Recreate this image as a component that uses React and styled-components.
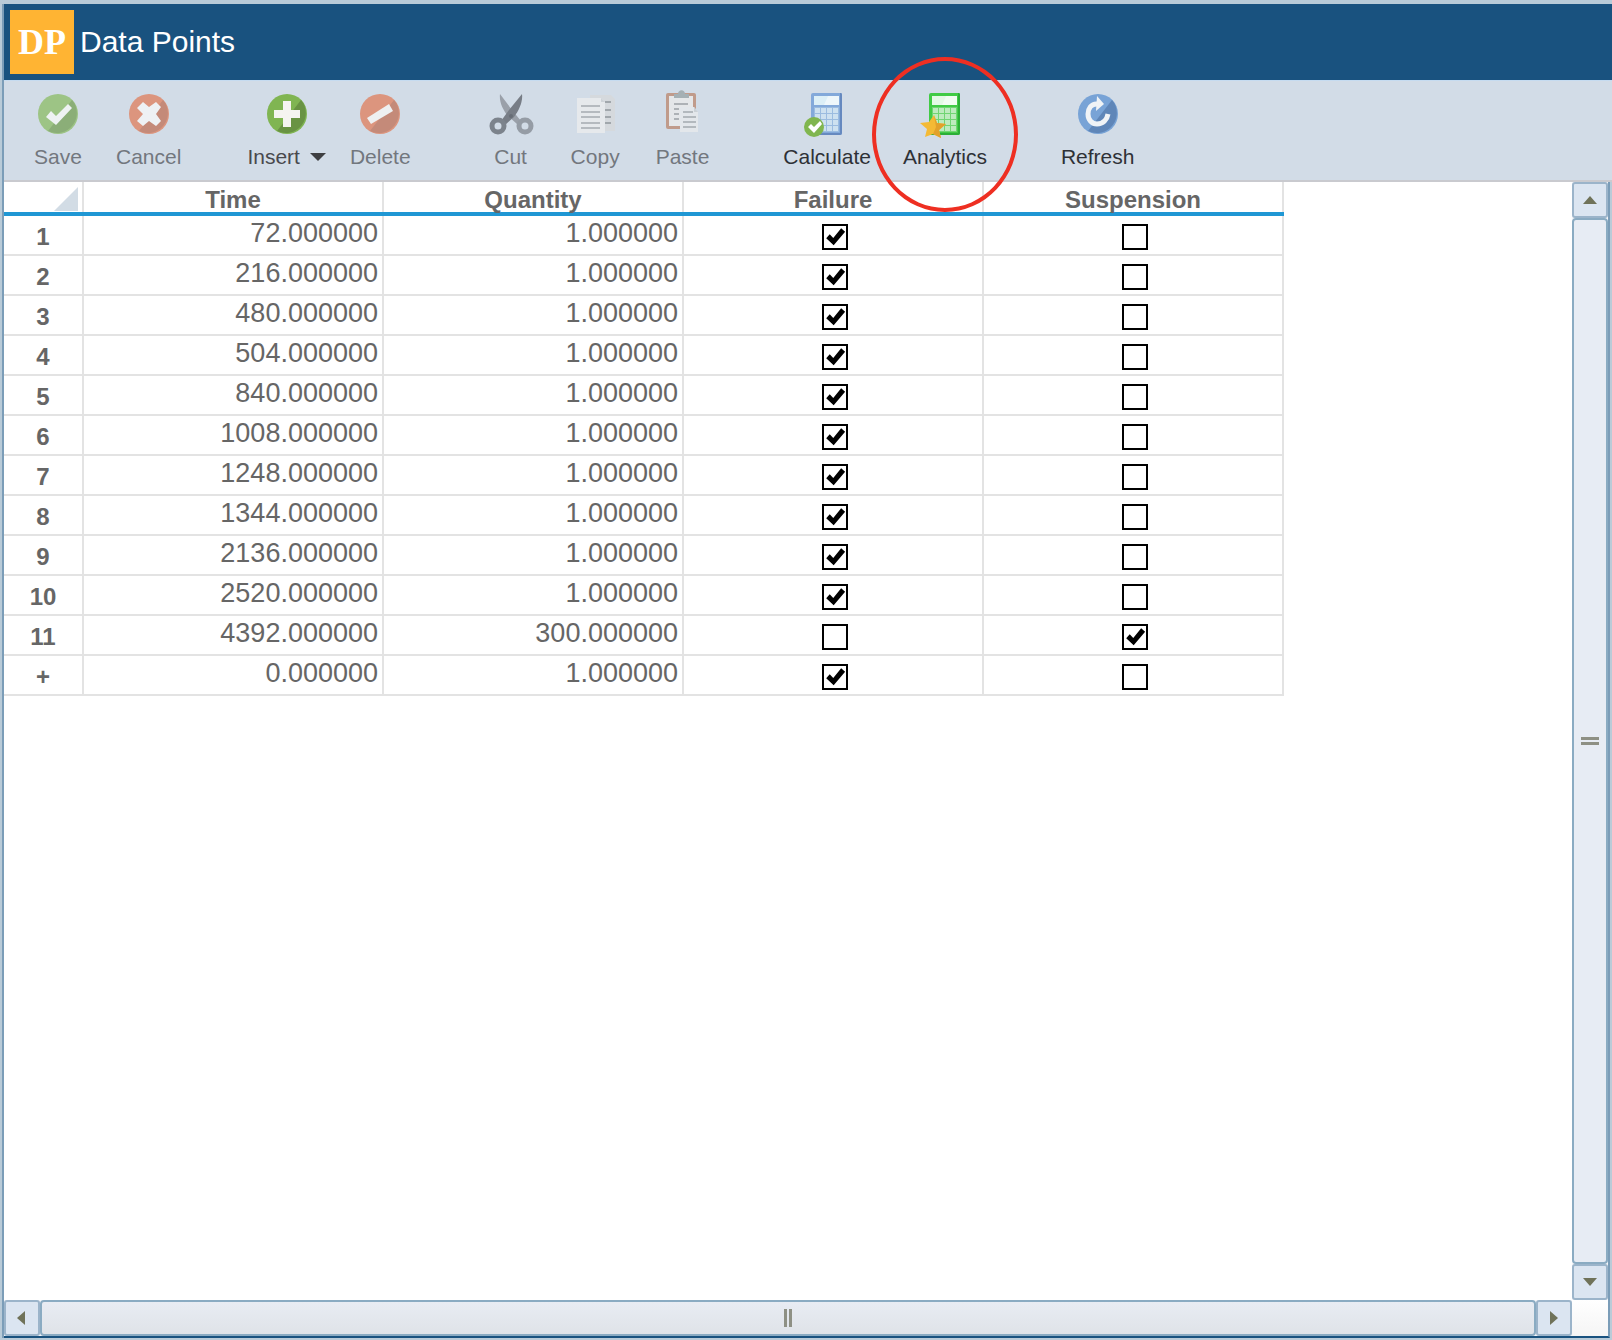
import React, { useState } from "react";
import styled, { createGlobalStyle, css } from "styled-components";

const GlobalStyle = createGlobalStyle`
  * {
    box-sizing: border-box;
  }

  body {
    margin: 0;
    background: #b9cbd8;
    font-family: "Liberation Sans", Arial, sans-serif;
  }
`;

const StyledWindow = styled.div`
  min-height: 100vh;
  padding: 4px 0 2px 2px;
  display: flex;
  flex-direction: column;
  background: #b9cbd8;
`;

const Frame = styled.div`
  flex: 1;
  display: flex;
  flex-direction: column;
  border-left: 2px solid #7b9db8;
`;

const TitleBar = styled.header`
  height: 76px;
  padding: 0 6px;
  display: flex;
  align-items: center;
  gap: 6px;
  background: #19527f;
`;

const Logo = styled.div`
  width: 64px;
  height: 64px;
  display: flex;
  align-items: center;
  justify-content: center;
  background: #ffb433;
  color: #ffffff;
  font: bold 36px/60px "Liberation Serif", serif;
`;

const Title = styled.h1`
  margin: 0;
  color: #ffffff;
  font-size: 30px;
  font-weight: normal;
`;

const StyledToolbar = styled.div`
  height: 102px;
  padding: 12px 30px 0;
  display: flex;
  align-items: flex-start;
  background: #d2dce7;
  border-bottom: 2px solid #c9cacf;
  box-shadow: inset 0 1px #c5dbf0;
`;

const ToolGroup = styled.div`
  display: flex;
  gap: ${({ $gap }) => $gap}px;
  margin-right: ${({ $after }) => $after}px;
`;

const StyledTool = styled.button`
  position: relative;
  min-width: 48px;
  padding: 0;
  display: flex;
  flex-direction: column;
  align-items: center;
  gap: 9px;
  border: 0;
  background: none;
  color: ${({ $color }) => $color};
  font: 21px/24px "Liberation Sans", Arial, sans-serif;
  cursor: pointer;

  &:disabled {
    color: #72777e;
    cursor: default;
  }

  svg {
    display: block;
    overflow: visible;
  }
`;

const ToolLabel = styled.span`
  display: flex;
  align-items: center;
  gap: 10px;
  white-space: nowrap;
`;

const Caret = styled.span`
  border: 8px solid transparent;
  border-top-color: #3e3f42;
  border-bottom: 0;
`;

const Highlight = styled.span`
  position: absolute;
  z-index: 2;
  top: -35px;
  left: 50%;
  width: 146px;
  height: 155px;
  transform: translateX(-50%);
  border: 4px solid #ee2f22;
  border-radius: 50%;
  pointer-events: none;
`;

const Workspace = styled.main`
  flex: 1;
  margin-right: 2px;
  display: grid;
  grid-template-columns: minmax(0, 1fr) 36px;
  grid-template-rows: 1fr 36px;
  background: #ffffff;
  border-right: 2px solid #7b9db8;
  border-bottom: 2px solid #19527f;
`;

const GridArea = styled.div`
  overflow: hidden;
`;

const DataTable = styled.table`
  width: 1280px;
  table-layout: fixed;
  border-collapse: separate;
  border-spacing: 0;
  color: #666666;
`;

const HeadCell = styled.th`
  width: ${({ $width }) => $width}px;
  height: 34px;
  padding: 4px 2px 0 0;
  background: linear-gradient(#e3e3e3, #e3e3e3) right / 2px 100% no-repeat;
  border-bottom: 4px solid #1f97d4;
  font-size: 24px;
  line-height: 26px;
`;

const ColumnName = styled.span`
  display: block;
  height: 26px;
  line-height: 28px;
`;

const Corner = styled.span`
  display: block;
  width: 24px;
  height: 24px;
  margin: 0 4px 0 auto;
  background: #d2dce5;
  clip-path: polygon(100% 0, 100% 100%, 0 100%);
`;

const cellLines = css`
  height: 40px;
  border-right: 2px solid #e3e3e3;
  border-bottom: 2px solid #e3e3e3;
`;

const RowHead = styled.th`
  ${cellLines}
  padding: 4px 0 0;
  font-size: 24px;
  line-height: 32px;
`;

const NumberCell = styled.td`
  ${cellLines}
  padding: 1px 4px 0;
  vertical-align: top;
  text-align: right;
  font-size: 27px;
  line-height: 32px;
`;

const CheckCell = styled.td`
  ${cellLines}
  padding: 8px 0 0 4px;
  vertical-align: top;
`;

const Checkbox = styled.input`
  appearance: none;
  display: block;
  width: 26px;
  height: 26px;
  margin: 0 auto;
  border: 2px solid #000000;
  background: #ffffff;

  &:checked::before {
    content: "";
    display: block;
    width: 22px;
    height: 22px;
    background: #000000;
    clip-path: polygon(10% 56%, 26% 38%, 42% 54%, 78% 10%, 96% 26%, 44% 88%);
  }
`;

const ScrollTrack = styled.div`
  display: flex;
  flex-direction: ${({ $vertical }) => ($vertical ? "column" : "row")};
  background: #f4f6f9;
`;

const ScrollButton = styled.button`
  width: 36px;
  height: 36px;
  padding: 0;
  flex: none;
  display: flex;
  align-items: center;
  justify-content: center;
  border: 2px solid #9bb4ca;
  border-radius: 3px;
  background: #dbe5f1;
`;

const ScrollThumb = styled.div`
  flex: 1;
  display: flex;
  flex-direction: ${({ $vertical }) => ($vertical ? "column" : "row")};
  align-items: center;
  justify-content: center;
  gap: 2px;
  border: 2px solid #8aabc2;
  border-radius: 4px;
  background: ${({ $vertical }) =>
    $vertical ? "#e7ecf4" : "linear-gradient(#e8ecf3, #dfe3e8)"};
`;

const GripLine = styled.span`
  width: ${({ $vertical }) => ($vertical ? 18 : 3)}px;
  height: ${({ $vertical }) => ($vertical ? 3 : 18)}px;
  background: #8e9084;
`;

const ScrollCorner = styled.div`
  background: linear-gradient(#ffffff, #f5f5f5);
`;

const Icon = ({ children }) => (
  <svg width="44" height="44" viewBox="0 0 44 44" aria-hidden="true">
    {children}
  </svg>
);

const Disc = ({ light, dark }) => (
  <>
    <circle cx="22" cy="22" r="20" fill={light} />
    <path d="M36 8A20 20 0 0 1 12 39Z" fill={dark} />
  </>
);

const SaveIcon = () => (
  <Icon>
    <Disc light="#9dc485" dark="#8bae78" />
    <path d="M10 25l5-6 5 5 12-12 4 4-16 17z" fill="#eef2f3" />
  </Icon>
);

const CancelIcon = () => (
  <Icon>
    <Disc light="#dc957e" dark="#c48a79" />
    <path
      d="M10 16l6-6 6 5 7-5 5 5-5 7 5 7-5 5-7-5-6 5-6-5 6-7z"
      fill="#eef1f4"
    />
  </Icon>
);

const InsertIcon = () => (
  <Icon>
    <Disc light="#80b552" dark="#699343" />
    <path d="M18 9h8v9h9v8h-9v9h-8v-9H9v-8h9z" fill="#f5f4f1" />
  </Icon>
);

const DeleteIcon = () => (
  <Icon>
    <Disc light="#dc957e" dark="#c48a79" />
    <path d="M9 26l22-14 4 7-22 13z" fill="#eef0f1" />
  </Icon>
);

const CutIcon = () => (
  <Icon>
    <path d="M11 2c-1 8 3 16 8 22l9 8 4-3-9-11z" fill="#9aa0a9" />
    <path d="M33 2c1 8-3 16-8 23l-9 8-4-4 8-11z" fill="#777d86" />
    <circle cx="9" cy="34" r="6" fill="none" stroke="#7c838c" strokeWidth="5" />
    <circle cx="36" cy="34" r="6" fill="none" stroke="#959ca5" strokeWidth="5" />
    <circle cx="22" cy="24" r="2" fill="#676d76" />
  </Icon>
);

const CopyIcon = () => (
  <Icon>
    <path d="M17 3h21l4 4v32H17z" fill="#d5d9dd" />
    <path d="M32 10h6M32 18h6M32 25h6M32 31h6" stroke="#a1a7ac" strokeWidth="2" />
    <path d="M4 6h24l4 4v31H4z" fill="#e6e9ec" />
    <path d="M28 6v4h4z" fill="#cdd2d7" />
    <path
      d="M8 14h19M8 20h19M8 25h19M8 31h19M8 36h19"
      stroke="#b5babf"
      strokeWidth="2"
    />
  </Icon>
);

const PasteIcon = () => (
  <Icon>
    <rect x="6" y="1" width="30" height="36" rx="2" fill="#c09b8b" />
    <rect x="9" y="4" width="24" height="30" fill="#e5e7e9" />
    <path d="M14 12h14M14 17h5M14 22h5M14 27h5" stroke="#aeb2b6" strokeWidth="2" />
    <path d="M14 6V2h4c0-5 7-5 7 0h4v4z" fill="#a5b0b4" />
    <path d="M20 15h14l4 5v20H20z" fill="#e3e7eb" />
    <path d="M34 15v5h4z" fill="#cbd1d6" />
    <path d="M23 20h10M23 25h13M23 30h13M23 35h13" stroke="#b3b9be" strokeWidth="2" />
  </Icon>
);

const Calculator = ({ frame, edge, back, keys, screen }) => (
  <>
    <rect x="6" y="1" width="31" height="42" rx="2" fill={frame} />
    <path d="M35 1h1q1 0 1 2v38q0 2-2 2H8v-2h27z" fill={edge} />
    <rect x="9" y="4" width="25" height="9" fill={screen} />
    <path d="M23 4h11v9H19z" fill="#ffffff" opacity="0.5" />
    <rect x="9" y="15" width="25" height="25" fill={back} />
    {[16, 22, 28, 34].map((y) =>
      [10, 16, 22, 28].map((x) => (
        <rect key={`${x}-${y}`} x={x} y={y} width="5" height="5" fill={keys} />
      ))
    )}
  </>
);

const CalculateIcon = () => (
  <Icon>
    <Calculator
      frame="#83a9da"
      edge="#6689bf"
      back="#9bbce0"
      keys="#cde1f0"
      screen="#dceff7"
    />
    <circle cx="9" cy="35" r="10" fill="#80b64f" />
    <path d="M3 35l3-3 3 3 6-6 2 3-8 9z" fill="#ffffff" />
  </Icon>
);

const AnalyticsIcon = () => (
  <Icon>
    <Calculator
      frame="#41cb45"
      edge="#2cae38"
      back="#70d573"
      keys="#bdebbe"
      screen="#e4fae5"
    />
    <path
      d="M11 23l3 8 9 1-7 6 2 8-8-4-8 3 2-8-7-6 9-1z"
      fill="#f4ba35"
    />
    <path d="M11 23l3 8 9 1-7 6 2 8-8-4 3-7z" fill="#e2a12b" />
  </Icon>
);

const RefreshIcon = () => (
  <Icon>
    <Disc light="#78a3d6" dark="#5f86b8" />
    <path
      d="M22 12C15 11 12 17 12 22c0 6 4 10 9 10 6 0 10-4 11-10"
      fill="none"
      stroke="#f0f3f6"
      strokeWidth="5"
    />
    <path d="M21 4l7 8-8 7z" fill="#f0f3f6" />
  </Icon>
);

const TOOL_GROUPS = [
  {
    gap: 34,
    after: 66,
    tools: [
      { label: "Save", icon: SaveIcon, disabled: true },
      { label: "Cancel", icon: CancelIcon, disabled: true },
    ],
  },
  {
    gap: 24,
    after: 76,
    tools: [
      { label: "Insert", icon: InsertIcon, color: "#48494d", menu: true },
      { label: "Delete", icon: DeleteIcon, disabled: true },
    ],
  },
  {
    gap: 36,
    after: 74,
    tools: [
      { label: "Cut", icon: CutIcon, disabled: true },
      { label: "Copy", icon: CopyIcon, disabled: true },
      { label: "Paste", icon: PasteIcon, disabled: true },
    ],
  },
  {
    gap: 32,
    after: 74,
    tools: [
      { label: "Calculate", icon: CalculateIcon },
      { label: "Analytics", icon: AnalyticsIcon, highlighted: true },
    ],
  },
  {
    gap: 32,
    after: 0,
    tools: [{ label: "Refresh", icon: RefreshIcon }],
  },
];

const COLUMNS = ["Time", "Quantity", "Failure", "Suspension"];

const ROWS = [
  { id: "1", time: 72, quantity: 1, failure: true, suspension: false },
  { id: "2", time: 216, quantity: 1, failure: true, suspension: false },
  { id: "3", time: 480, quantity: 1, failure: true, suspension: false },
  { id: "4", time: 504, quantity: 1, failure: true, suspension: false },
  { id: "5", time: 840, quantity: 1, failure: true, suspension: false },
  { id: "6", time: 1008, quantity: 1, failure: true, suspension: false },
  { id: "7", time: 1248, quantity: 1, failure: true, suspension: false },
  { id: "8", time: 1344, quantity: 1, failure: true, suspension: false },
  { id: "9", time: 2136, quantity: 1, failure: true, suspension: false },
  { id: "10", time: 2520, quantity: 1, failure: true, suspension: false },
  { id: "11", time: 4392, quantity: 300, failure: false, suspension: true },
  { id: "+", time: 0, quantity: 1, failure: true, suspension: false },
];

const ARROWS = {
  up: "M9 5l7 8H2z",
  down: "M2 5h14l-7 8z",
  left: "M4 9l8-7v14z",
  right: "M5 2l8 7-8 7z",
};

function Toolbar() {
  return (
    <StyledToolbar role="toolbar" aria-label="Data Points">
      {TOOL_GROUPS.map((group) => (
        <ToolGroup
          key={group.tools[0].label}
          $gap={group.gap}
          $after={group.after}
        >
          {group.tools.map((tool) => (
            <StyledTool
              key={tool.label}
              type="button"
              disabled={tool.disabled}
              $color={tool.color || "#2e3136"}
            >
              <tool.icon />
              <ToolLabel>
                {tool.label}
                {tool.menu && <Caret />}
              </ToolLabel>
              {tool.highlighted && <Highlight />}
            </StyledTool>
          ))}
        </ToolGroup>
      ))}
    </StyledToolbar>
  );
}

function DataGrid() {
  const [rows, setRows] = useState(ROWS);

  const toggle = (id, field) =>
    setRows(
      rows.map((row) => (row.id === id ? { ...row, [field]: !row[field] } : row))
    );

  return (
    <DataTable>
      <thead>
        <tr>
          <HeadCell $width={80} aria-label="Row">
            <Corner />
          </HeadCell>
          {COLUMNS.map((name) => (
            <HeadCell key={name} $width={300} scope="col">
              <ColumnName>{name}</ColumnName>
            </HeadCell>
          ))}
        </tr>
      </thead>
      <tbody>
        {rows.map((row) => (
          <tr key={row.id}>
            <RowHead scope="row">{row.id}</RowHead>
            <NumberCell>{row.time.toFixed(6)}</NumberCell>
            <NumberCell>{row.quantity.toFixed(6)}</NumberCell>
            {["failure", "suspension"].map((field) => (
              <CheckCell key={field}>
                <Checkbox
                  type="checkbox"
                  aria-label={`${field} ${row.id}`}
                  checked={row[field]}
                  onChange={() => toggle(row.id, field)}
                />
              </CheckCell>
            ))}
          </tr>
        ))}
      </tbody>
    </DataTable>
  );
}

function ScrollArrow({ direction }) {
  return (
    <ScrollButton type="button" aria-label={`Scroll ${direction}`}>
      <svg width="18" height="18" viewBox="0 0 18 18" aria-hidden="true">
        <path d={ARROWS[direction]} fill="#6f7259" />
      </svg>
    </ScrollButton>
  );
}

function ScrollBar({ vertical }) {
  return (
    <ScrollTrack $vertical={vertical}>
      <ScrollArrow direction={vertical ? "up" : "left"} />
      <ScrollThumb $vertical={vertical}>
        <GripLine $vertical={vertical} />
        <GripLine $vertical={vertical} />
      </ScrollThumb>
      <ScrollArrow direction={vertical ? "down" : "right"} />
    </ScrollTrack>
  );
}

function App() {
  return (
    <StyledWindow>
      <GlobalStyle />
      <Frame>
        <TitleBar>
          <Logo>DP</Logo>
          <Title>Data Points</Title>
        </TitleBar>
        <Toolbar />
        <Workspace>
          <GridArea>
            <DataGrid />
          </GridArea>
          <ScrollBar vertical />
          <ScrollBar />
          <ScrollCorner />
        </Workspace>
      </Frame>
    </StyledWindow>
  );
}

export default App;
